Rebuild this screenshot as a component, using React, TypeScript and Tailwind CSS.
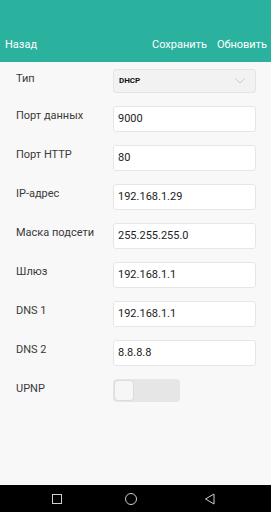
import { useState } from 'react';

const fields = [
  { label: 'Порт данных', value: '9000' },
  { label: 'Порт HTTP', value: '80' },
  { label: 'IP-адрес', value: '192.168.1.29' },
  { label: 'Маска подсети', value: '255.255.255.0' },
  { label: 'Шлюз', value: '192.168.1.1' },
  { label: 'DNS 1', value: '192.168.1.1' },
  { label: 'DNS 2', value: '8.8.8.8' },
];

export default function App() {
  const [upnp, setUpnp] = useState(false);

  return (
    <div className="flex h-[512px] w-[271px] flex-col bg-[#f8f8f8] font-['Roboto',sans-serif]">
      {/* Header */}
      <div className="flex h-[62px] shrink-0 items-start justify-between bg-[#2bb29e] pl-[5px] pr-[4px] pt-[38px] text-[11px] leading-[14px] text-white">
        <span>Назад</span>
        <div className="flex gap-[10px]">
          <span>Сохранить</span>
          <span>Обновить</span>
        </div>
      </div>

      {/* Form */}
      <div className="flex flex-1 flex-col gap-[13px] pt-[7px]">
        <div className="flex items-start">
          <span className="w-[113px] pl-[16px] pt-[3px] text-[11px] leading-[14px] text-[#3a3a3a]">Тип</span>
          <div className="flex h-[24px] w-[143px] items-center justify-between rounded-[3px] border border-[#e4e4e4] bg-[#f2f2f2] pl-[5px] pr-[10px]">
            <span className="text-[8px] font-bold text-[#111]">DHCP</span>
            <svg width="10" height="6" viewBox="0 0 10 6" fill="none" stroke="#c8c8c8" strokeWidth="1">
              <path d="M0.5 0.5 L5 5 L9.5 0.5" />
            </svg>
          </div>
        </div>

        {fields.map(f => (
          <div key={f.label} className="flex items-start">
            <span className="w-[113px] pl-[16px] pt-[3px] text-[11px] leading-[14px] text-[#3a3a3a]">{f.label}</span>
            <div className="flex h-[26px] w-[143px] items-center rounded-[3px] border border-[#e6e6e6] bg-white pl-[4px] text-[11px] text-[#222]">
              {f.value}
            </div>
          </div>
        ))}

        <div className="flex items-start">
          <span className="w-[113px] pl-[16px] pt-[3px] text-[11px] leading-[14px] text-[#3a3a3a]">UPNP</span>
          <button
            onClick={() => setUpnp(v => !v)}
            className="flex h-[23px] w-[67px] items-center rounded-[4px] bg-[#e6e6e6] p-[1px]"
          >
            <span
              className={`block h-[21px] w-[20px] rounded-[4px] border border-[#dcdcdc] bg-[#f6f6f6] ${upnp ? 'ml-auto' : ''}`}
            />
          </button>
        </div>
      </div>

      {/* Nav bar */}
      <div className="flex h-[27px] shrink-0 items-center bg-black">
        <div className="flex w-[118px] justify-center">
          <div className="h-[10px] w-[10px] border border-[#cfcfcf]" />
        </div>
        <div className="flex w-[34px] justify-center">
          <div className="h-[12px] w-[12px] rounded-full border border-[#cfcfcf]" />
        </div>
        <div className="flex w-[128px] justify-center">
          <svg width="11" height="12" viewBox="0 0 11 12" fill="none" stroke="#cfcfcf" strokeWidth="1">
            <path d="M10 1 L1.5 6 L10 11 Z" />
          </svg>
        </div>
      </div>
    </div>
  );
}
